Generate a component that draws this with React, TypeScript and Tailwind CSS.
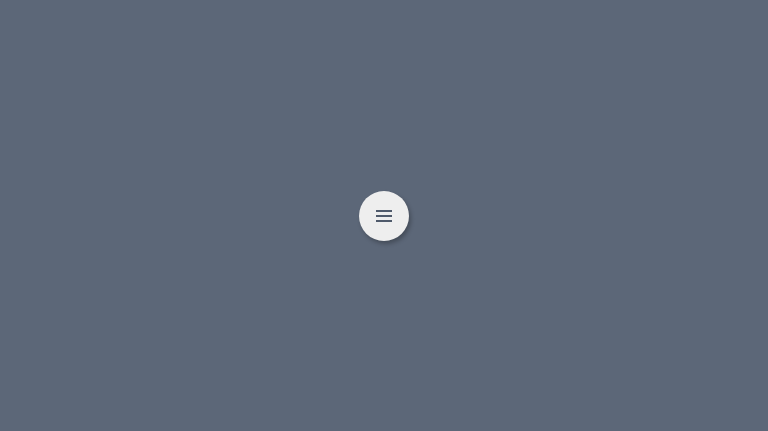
export default function App() {
  return (
    <div className="flex h-screen w-full items-center justify-center bg-[#5c6778]">
      <button
        type="button"
        aria-label="Open menu"
        className="flex size-[50px] items-center justify-center rounded-full bg-[#eeeeee] shadow-[2px_3px_4px_rgba(0,0,0,0.25)]"
      >
        <span className="flex w-4 flex-col gap-[3px]">
          <span className="h-[2px] w-full bg-[#4f5a6b]" />
          <span className="h-[2px] w-full bg-[#4f5a6b]" />
          <span className="h-[2px] w-full bg-[#4f5a6b]" />
        </span>
      </button>
    </div>
  )
}
